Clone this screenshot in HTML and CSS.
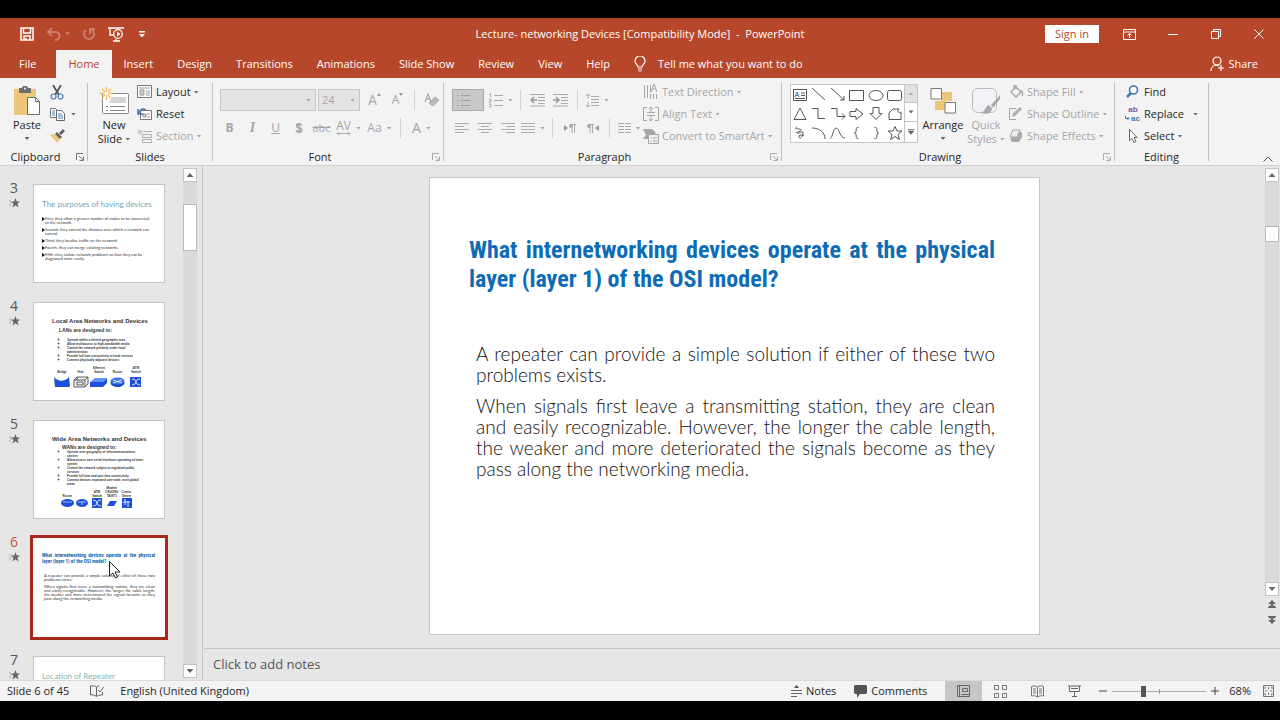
FILE: index.html
```html
<!DOCTYPE html>
<html lang="en">
<head>
    <meta charset="UTF-8">
    <meta name="viewport" content="width=device-width, initial-scale=1.0">
    <title>Lecture- networking Devices - PowerPoint</title>
    <link rel="stylesheet" href="styles.css">
</head>
<body>

    <!-- Shared icons -->
    <svg class="defs" width="0" height="0">
        <symbol id="star" viewBox="0 0 11 10"><path d="M6.500 0l1.300 3.500H11L8.500 5.700l1 3.800-3-2.200-3 2.200 1-3.800L2 3.500h3.200z" fill="#666"/><path d="M0 3h2M1 5h2M0 7h2" stroke="#999" stroke-width=".7"/></symbol>
        <symbol id="launch" viewBox="0 0 8 8"><path d="M.5 7V.5H7M3 3l4 4M7.500 3.500v4h-4" fill="none" stroke="currentColor"/></symbol>
    </svg>

    <!-- Title bar -->
    <header class="titlebar">
        <div class="quick-access">
            <button class="qa" aria-label="Save"><svg width="14" height="14" viewBox="0 0 14 14"><path d="M1 1h12v12H1zM3.500 1v5h7V1M4 13V9h6v4M6 11v2" fill="none" stroke="#fff" stroke-width="1.500"/></svg></button>
            <button class="qa faded" aria-label="Undo"><svg width="24" height="14" viewBox="0 0 24 14"><path d="M6 1L2 5l4 4M2 5h7c6 0 6 7 0 8" fill="none" stroke="#fff" stroke-width="2"/><path d="M19 5h5l-2.500 3z" fill="#fff"/></svg></button>
            <button class="qa faded" aria-label="Redo"><svg width="14" height="14" viewBox="0 0 14 14"><path d="M4 3a5 5 0 1 0 6 0M8 7V2h5" fill="none" stroke="#fff" stroke-width="2"/></svg></button>
            <button class="qa" aria-label="Start from beginning"><svg width="16" height="16" viewBox="0 0 16 16"><path d="M0 2h16M2 2v7h4M5 15h7M8 13v2" fill="none" stroke="#fff" stroke-width="1.300"/><circle cx="10" cy="8" r="4.300" fill="#b7472a" stroke="#fff" stroke-width="1.200"/><path d="M9 5.500l3.500 2.500L9 10.500z" fill="#fff"/></svg></button>
            <button class="qa more" aria-label="Customize toolbar"><svg width="6" height="7" viewBox="0 0 6 7"><path d="M0 0h6v1.400H0zM0 3h6L3 6.500z" fill="#fff"/></svg></button>
        </div>
        <h1 class="doc-title">Lecture- networking Devices [Compatibility Mode] &nbsp;-&nbsp; PowerPoint</h1>
        <div class="window-controls">
            <button class="sign-in">Sign in</button>
            <button class="win" aria-label="Ribbon display options"><svg width="13" height="11" viewBox="0 0 13 11"><path d="M.5.5h12v10H.5zM.5 3h12M6.500 9V4.500M4.500 6.500l2-2 2 2" fill="none" stroke="#fff"/></svg></button>
            <button class="win" aria-label="Minimize"><svg width="10" height="10" viewBox="0 0 10 10"><path d="M0 5.500h10" stroke="#fff"/></svg></button>
            <button class="win" aria-label="Restore"><svg width="10" height="10" viewBox="0 0 10 10"><path d="M.5 2.500h7v7h-7zM2.500 2.500v-2h7v7h-2" fill="none" stroke="#fff"/></svg></button>
            <button class="win" aria-label="Close"><svg width="10" height="10" viewBox="0 0 10 10"><path d="M.5.5l9 9M9.500.5l-9 9" stroke="#fff"/></svg></button>
        </div>
    </header>

    <!-- Ribbon tabs -->
    <nav class="tabs">
        <a class="tab file" href="#">File</a>
        <a class="tab active" href="#">Home</a>
        <a class="tab" href="#">Insert</a>
        <a class="tab" href="#">Design</a>
        <a class="tab" href="#">Transitions</a>
        <a class="tab" href="#">Animations</a>
        <a class="tab" href="#">Slide Show</a>
        <a class="tab" href="#">Review</a>
        <a class="tab" href="#">View</a>
        <a class="tab" href="#">Help</a>
        <button class="tell-me"><svg width="12" height="16" viewBox="0 0 12 16"><path d="M4 11c0-2-3-3-3-6a5 5 0 0 1 10 0c0 3-3 4-3 6zM4 13h4M4.500 15h3" fill="none" stroke="#fff" stroke-width="1.200"/></svg>Tell me what you want to do</button>
        <button class="share"><svg width="15" height="16" viewBox="0 0 15 16"><circle cx="7" cy="5" r="4" fill="none" stroke="#fff" stroke-width="1.200"/><path d="M1 15c0-3 2-6 6-6l2 1M11 9v6M8 12h6" fill="none" stroke="#fff" stroke-width="1.200"/></svg>Share</button>
    </nav>

    <!-- Ribbon -->
    <section class="ribbon">
        <div class="group clipboard">
            <div class="group-body">
                <button class="big paste"><svg width="28" height="30" viewBox="0 0 28 30"><path d="M1 3h22v26H1z" fill="#ebc777"/><path d="M6 2h3c0-3 6-3 6 0h3v5H6z" fill="#6d6d6d"/><circle cx="12" cy="2.500" r="1" fill="#fff"/><path d="M14.500 11.500h8l4 4v13h-12z" fill="#fff" stroke="#6d6d6d"/><path d="M22.500 11.500v4h4" fill="none" stroke="#6d6d6d"/></svg><span>Paste</span><i class="caret"></i></button>
                <div class="stack">
                    <button class="small" aria-label="Cut"><svg width="14" height="15" viewBox="0 0 14 15"><path d="M3 0l6 10M11 0L5 10" stroke="#555" stroke-width="1.800"/><circle cx="3.500" cy="11.500" r="2.500" fill="none" stroke="#4a7ebb" stroke-width="1.200"/><circle cx="10.500" cy="11.500" r="2.500" fill="none" stroke="#4a7ebb" stroke-width="1.200"/></svg></button>
                    <button class="small" aria-label="Copy"><svg width="15" height="14" viewBox="0 0 15 14"><path d="M.5 1.500h5l2 2v7h-7z" fill="#fff" stroke="#777"/><path d="M6.500 3.500h5l3 3v7h-8z" fill="#fff" stroke="#666"/><path d="M8 7h4M8 9h5M8 11h5M2 4h3M2 6h3M2 8h3" stroke="#4a7ebb"/></svg><i class="caret"></i></button>
                    <button class="small" aria-label="Format painter"><svg width="15" height="14" viewBox="0 0 15 14"><path d="M0 6l5-1 5 5-3 4C5 10 2 9 0 6z" fill="#ebc777"/><path d="M5 5l2-2 5 5-2 2zM9 4l4-4 2 2-4 4z" fill="#606060"/></svg></button>
                </div>
            </div>
            <div class="group-label">Clipboard<button class="launcher dark" aria-label="Clipboard options"><svg width="8" height="8"><use href="#launch"/></svg></button></div>
        </div>

        <div class="group slides">
            <div class="group-body">
                <button class="big new-slide"><svg width="29" height="28" viewBox="0 0 29 28"><rect x="2.500" y="6.500" width="26" height="20" rx="1" fill="#fff" stroke="#8a8a8a"/><path d="M12 10h14v6H9z" fill="#d4d4d4"/><path d="M6 19.500h2M10 19.500h15M6 23.500h2M10 23.500h15" stroke="#888"/><path d="M6.500 0v13M0 6.500h13M2 2l9 9M11 2l-9 9" stroke="#f0bd62" stroke-width="1.300"/><circle cx="6.500" cy="6.500" r="2" fill="#fff"/></svg><span>New</span><span>Slide<i class="caret"></i></span></button>
                <div class="stack">
                    <button class="small"><svg width="16" height="14" viewBox="0 0 16 14"><path d="M.5.5h14v12H.5z" fill="#fff" stroke="#777"/><path d="M2 3h11M3 5h4v5H3zM9 6h4M9 8h4M9 10h4" fill="#ccc" stroke="#999"/></svg>Layout<i class="caret"></i></button>
                    <button class="small"><svg width="16" height="14" viewBox="0 0 16 14"><path d="M3.500 3.500h11v9h-11z" fill="#fff" stroke="#777"/><path d="M6 7h3v3H6zM10 7h3M10 10h3" fill="#ccc" stroke="#999"/><path d="M2 6C3 2 6 1 9 3M1 2v5h5" fill="none" stroke="#3f78b5" stroke-width="1.500"/></svg>Reset</button>
                    <button class="small" disabled><svg width="16" height="14" viewBox="0 0 16 14"><path d="M6 2.500h9M5.500 5.500h9v3h-9zM5.500 10.500h9v3h-9z" fill="none" stroke="#b0b0b0"/><path d="M3 0v6M0 3h6M1 1l4 4M5 1L1 5" stroke="#c4c4c4"/></svg>Section<i class="caret"></i></button>
                </div>
            </div>
            <div class="group-label">Slides</div>
        </div>

        <div class="group font">
            <div class="group-body tools">
                <div class="tool-row">
                    <label class="combo face"><select aria-label="Font" disabled><option></option></select><i class="caret"></i></label>
                    <label class="combo size"><select aria-label="Font size" disabled><option>24</option></select><i class="caret"></i></label>
                    <button class="tool" disabled aria-label="Increase font size"><span class="letter">A</span><svg class="mark" width="4" height="3" viewBox="0 0 4 3"><path d="M0 3l2-3 2 3z" fill="#999"/></svg></button>
                    <button class="tool" disabled aria-label="Decrease font size"><span class="letter lesser">A</span><svg class="mark" width="4" height="3" viewBox="0 0 4 3"><path d="M0 0l2 3 2-3z" fill="#999"/></svg></button>
                    <i class="rule"></i>
                    <button class="tool" disabled aria-label="Clear formatting"><svg width="15" height="15" viewBox="0 0 15 15"><path d="M1 9l3-8 3 8M2 6h4" fill="none" stroke="#aaa" stroke-width="1.300"/><path d="M5 10l6-6 4 3-6 6z" fill="#bbb" stroke="#aaa"/></svg></button>
                </div>
                <div class="tool-row">
                    <button class="tool" disabled><b>B</b></button>
                    <button class="tool" disabled><em class="serif">I</em></button>
                    <button class="tool" disabled><u>U</u></button>
                    <button class="tool shadow" disabled><b>S</b></button>
                    <button class="tool" disabled><s>abc</s></button>
                    <button class="tool wide" disabled aria-label="Character spacing"><span class="spacing-icon">AV<svg width="15" height="5" viewBox="0 0 15 5"><path d="M1 2.500h13M3 .5l-2 2 2 2M12 .5l2 2-2 2" fill="none" stroke="#aaa"/></svg></span><i class="caret"></i></button>
                    <button class="tool wide" disabled>Aa<i class="caret"></i></button>
                    <i class="rule"></i>
                    <button class="tool wide" disabled><span class="letter">A</span><i class="caret"></i></button>
                </div>
            </div>
            <div class="group-label">Font<button class="launcher" aria-label="Font options"><svg width="8" height="8"><use href="#launch"/></svg></button></div>
        </div>

        <div class="group paragraph">
            <div class="group-body">
                <div class="tools">
                    <div class="tool-row">
                        <button class="tool bullets" disabled aria-label="Bullets"><svg width="24" height="15" viewBox="0 0 24 15"><path d="M1 2.500h2M1 7.500h2M1 12.500h2M5 2.500h9M5 7.500h9M5 12.500h9" stroke="#a2a0a2"/></svg></button>
                        <button class="tool wide" disabled aria-label="Numbering"><svg width="14" height="15" viewBox="0 0 14 15"><path d="M5 2.500h9M5 7.500h9M5 12.500h9M.5 1l1-.5V4M0 6h2v2H0v1h2M0 11h2v3H0" fill="none" stroke="#aaa"/></svg><i class="caret"></i></button>
                        <i class="rule"></i>
                        <button class="tool" disabled aria-label="Decrease indent"><svg width="16" height="14" viewBox="0 0 16 14"><path d="M0 1.500h15M8 4.500h7M8 7.500h7M8 10.500h7M0 13h15" stroke="#aaa"/><path d="M7 7H1M4 4L1 7l3 3" fill="none" stroke="#999" stroke-width="1.500"/></svg></button>
                        <button class="tool" disabled aria-label="Increase indent"><svg width="16" height="14" viewBox="0 0 16 14"><path d="M0 1.500h15M8 4.500h7M8 7.500h7M8 10.500h7M0 13h15" stroke="#aaa"/><path d="M0 7h6M3 4l3 3-3 3" fill="none" stroke="#999" stroke-width="1.500"/></svg></button>
                        <i class="rule"></i>
                        <button class="tool wide" disabled aria-label="Line spacing"><svg width="14" height="15" viewBox="0 0 14 15"><path d="M6 3.500h8M6 6.500h8M6 9.500h8M6 12.500h8M3 1v5M1 3l2-2 2 2M3 14V9M1 12l2 2 2-2" fill="none" stroke="#aaa"/></svg><i class="caret"></i></button>
                    </div>
                    <div class="tool-row">
                        <button class="tool" disabled aria-label="Align left"><svg width="14" height="11" viewBox="0 0 14 11"><path d="M0 .5h14M0 3.500h9M0 6.500h14M0 9.500h9" stroke="#aaa"/></svg></button>
                        <button class="tool" disabled aria-label="Center"><svg width="14" height="11" viewBox="0 0 14 11"><path d="M0 .5h14M3 3.500h8M0 6.500h14M3 9.500h8" stroke="#aaa"/></svg></button>
                        <button class="tool" disabled aria-label="Align right"><svg width="14" height="11" viewBox="0 0 14 11"><path d="M0 .5h14M5 3.500h9M0 6.500h14M5 9.500h9" stroke="#aaa"/></svg></button>
                        <button class="tool wide" disabled aria-label="Justify"><svg width="14" height="11" viewBox="0 0 14 11"><path d="M0 .5h14M0 3.500h14M0 6.500h14M0 9.500h14" stroke="#aaa"/></svg><i class="caret"></i></button>
                        <i class="rule"></i>
                        <button class="tool" disabled aria-label="Left-to-right"><svg width="12" height="9" viewBox="0 0 12 9"><path d="M0 1l4 3-4 3z" fill="#999"/><path d="M8 0v9M10.500 0v9M6 .5h6" stroke="#aaa"/><circle cx="7" cy="2" r="2" fill="#aaa"/></svg></button>
                        <button class="tool" disabled aria-label="Right-to-left"><svg width="12" height="9" viewBox="0 0 12 9"><path d="M12 1L8 4l4 3z" fill="#999"/><path d="M3 0v9M5.500 0v9M1 .5h6" stroke="#aaa"/><circle cx="2" cy="2" r="2" fill="#aaa"/></svg></button>
                        <i class="rule"></i>
                        <button class="tool wide" disabled aria-label="Columns"><svg width="13" height="11" viewBox="0 0 13 11"><path d="M0 .5h6M0 3.500h6M0 6.500h6M0 9.500h6M7 .5h6M7 3.500h6M7 6.500h6M7 9.500h6" stroke="#aaa"/></svg><i class="caret"></i></button>
                    </div>
                </div>
                <div class="stack">
                    <button class="small" disabled><svg width="16" height="16" viewBox="0 0 16 16"><path d="M1.500 1v13M4.500 1v13M7.500 1v7M7.500 10v5M10.500 10v5M13.500 10v5M8 8l3-8 3 8M9 5h4" fill="none" stroke="#a5a5a5"/></svg>Text Direction<i class="caret"></i></button>
                    <button class="small" disabled><svg width="16" height="14" viewBox="0 0 16 14"><path d="M4 .5H.5v13H4M12 .5h3.500v13H12M4 5.500h8M4 8.500h8M8 0v5M6 2l2-2 2 2M8 14V9M6 12l2 2 2-2" fill="none" stroke="#a5a5a5"/></svg>Align Text<i class="caret"></i></button>
                    <button class="small" disabled><svg width="16" height="15" viewBox="0 0 16 15"><path d="M0 0h9l4 4-4 3H6v3H0l3-4z" fill="#a5a5a5"/><path d="M5.500 5.500h10v9h-10z" fill="#eee" stroke="#a5a5a5"/><path d="M8 9h1M10 9h4M8 12h1M10 12h4" stroke="#a5a5a5"/></svg>Convert to SmartArt<i class="caret"></i></button>
                </div>
            </div>
            <div class="group-label">Paragraph<button class="launcher" aria-label="Paragraph options"><svg width="8" height="8"><use href="#launch"/></svg></button></div>
        </div>

        <div class="group drawing">
            <div class="group-body">
                <div class="gallery">
                    <div class="shapes">
                        <button aria-label="Text box"><svg viewBox="0 0 16 14"><path d="M1.500 1.500h13v11h-13z"/><path d="M3 9l2-5 2 5M4 7.500h2" stroke="#4a7ebb"/><path d="M9 5h4M9 7.500h4M3 10.500h10"/></svg></button>
                        <button aria-label="Line"><svg viewBox="0 0 16 14"><path d="M1 0l13 12"/></svg></button>
                        <button aria-label="Arrow"><svg viewBox="0 0 16 14"><path d="M1 0l13 12M14 8v4h-4"/></svg></button>
                        <button aria-label="Rectangle"><svg viewBox="0 0 16 14"><path d="M.5 2.500h14v10H.5z"/></svg></button>
                        <button aria-label="Oval"><svg viewBox="0 0 16 14"><ellipse cx="8" cy="7.500" rx="7" ry="5"/></svg></button>
                        <button aria-label="Rounded rectangle"><svg viewBox="0 0 16 14"><rect x=".5" y="2.500" width="14" height="10" rx="2"/></svg></button>
                        <button aria-label="Triangle"><svg viewBox="0 0 16 14"><path d="M8 1l6 11.500H2z"/></svg></button>
                        <button aria-label="Elbow connector"><svg viewBox="0 0 16 14"><path d="M1 1.500h6v10h7"/></svg></button>
                        <button aria-label="Elbow arrow"><svg viewBox="0 0 16 14"><path d="M1 1.500h6v8h8M12 6.500l3 3-3 3"/></svg></button>
                        <button aria-label="Right arrow"><svg viewBox="0 0 16 14"><path d="M1 4.500h6v-3l7 5.500-7 5.500v-3H1z"/></svg></button>
                        <button aria-label="Down arrow"><svg viewBox="0 0 16 14"><path d="M5 .5h6v6h3l-6 6-6-6h3z"/></svg></button>
                        <button aria-label="Freeform"><svg viewBox="0 0 16 14"><path d="M2 12.500V6l4-4h6c-3 3 0 4 2 3v7.500z"/></svg></button>
                        <button aria-label="Scribble"><svg viewBox="0 0 16 14"><path d="M5 1c-5 3 4 1 4 3S3 6 5 7s6-3 6 0-3 7-4 4 5-2 5-1"/></svg></button>
                        <button aria-label="Arc"><svg viewBox="0 0 16 14"><path d="M1 2c7 0 13 4 13 11"/></svg></button>
                        <button aria-label="Curve"><svg viewBox="0 0 16 14"><path d="M0 12c3 0 3-10 6-10s4 10 9 10"/></svg></button>
                        <button aria-label="Left brace"><svg viewBox="0 0 16 14"><path d="M9.500 1.500h-1C6 1.500 8.500 6.500 5.500 7 8.500 7.500 6 12.500 8.500 12.500h1"/></svg></button>
                        <button aria-label="Right brace"><svg viewBox="0 0 16 14"><path d="M6.500 1.500h1C10 1.500 7.500 6.500 10.500 7 7.500 7.500 10 12.500 7.500 12.500h-1"/></svg></button>
                        <button aria-label="Star"><svg viewBox="0 0 16 14"><path d="M8 .5l2 4.500h5l-4 3.500 1.500 5L8 10.500l-4.500 3 1.500-5L1 5h5z"/></svg></button>
                    </div>
                    <div class="gallery-nav">
                        <button class="off" aria-label="Previous shapes"><i class="caret up"></i></button>
                        <button aria-label="Next shapes"><i class="caret"></i></button>
                        <button aria-label="More shapes"><i class="caret more"></i></button>
                    </div>
                </div>
                <button class="big arrange"><svg width="26" height="26" viewBox="0 0 26 26"><path d="M11 4h11v9H11zM5 13h10v9H5z" fill="#ebc777"/><path d="M1 .5h10.500V11H1zM15 14.500h10.500V25H15z" fill="#fff" stroke="#777"/></svg><span>Arrange</span><i class="caret"></i></button>
                <button class="big quick" disabled><svg width="30" height="28" viewBox="0 0 30 28"><rect x="1.500" y="1.500" width="24" height="24" rx="5" fill="#f3f0f7" stroke="#bbb"/><path d="M29 8L20 18l2 3 7-9zM18 18c-4 1-3 6-8 8 6 2 11 0 11-5z" fill="#ababab"/></svg><span>Quick</span><span>Styles<i class="caret"></i></span></button>
                <div class="stack">
                    <button class="small" disabled><svg width="16" height="14" viewBox="0 0 16 14"><path d="M3 7l5-5 5 5-5 5zM6 5V0h2v4M13 5c2 2 2 4 1 6" fill="none" stroke="#a5a5a5" stroke-width="1.300"/></svg>Shape Fill<i class="caret"></i></button>
                    <button class="small" disabled><svg width="16" height="14" viewBox="0 0 16 14"><path d="M8 1.500H1.500v11H8" fill="none" stroke="#a5a5a5"/><path d="M4 10l1-4 7-6 2 2-7 7z" fill="#b0b0b0"/></svg>Shape Outline<i class="caret"></i></button>
                    <button class="small" disabled><svg width="16" height="14" viewBox="0 0 16 14"><path d="M2 10l2 3h7l3-5V4l-3-3z" fill="#aaa"/><path d="M5 1h7l-3 7H2z" fill="#eee" stroke="#a5a5a5"/></svg>Shape Effects<i class="caret"></i></button>
                </div>
            </div>
            <div class="group-label">Drawing<button class="launcher" aria-label="Drawing options"><svg width="8" height="8"><use href="#launch"/></svg></button></div>
        </div>

        <div class="group editing">
            <div class="group-body">
                <div class="stack">
                    <button class="small"><svg width="16" height="14" viewBox="0 0 16 14"><circle cx="8.500" cy="5" r="4" fill="#fff" stroke="#3f78b5" stroke-width="1.600"/><path d="M6 8l-4 4" stroke="#3f78b5" stroke-width="2.500"/></svg>Find</button>
                    <button class="small"><span class="replace-icon"><span class="from">ab</span><span class="to"><svg width="5" height="5" viewBox="0 0 5 5"><path d="M.5 0v2.500h3M2.500 1l1.500 1.500L2.500 4" fill="none" stroke="#3f78b5"/></svg>ac</span></span>Replace<i class="caret far"></i></button>
                    <button class="small"><svg width="16" height="14" viewBox="0 0 16 14"><path d="M4.500.5v11l2.500-2 2 4 2-1-2-4h3z" fill="#fff" stroke="#666"/></svg>Select<i class="caret"></i></button>
                </div>
            </div>
            <div class="group-label">Editing</div>
        </div>
        <button class="collapse" aria-label="Collapse the ribbon"><svg width="10" height="6" viewBox="0 0 10 6"><path d="M.5 5.500L5 1l4.500 4.500" fill="none" stroke="#555"/></svg></button>
    </section>

    <!-- Work area -->
    <main class="workspace">
        <aside class="slide-pane">
            <ol class="thumbs">
                <li class="thumb-item">
                    <div class="thumb-no">3<svg width="11" height="10"><use href="#star"/></svg></div>
                    <div class="thumb purposes">
                        <h3>The purposes of having devices</h3>
                        <ul>
                            <li>First, they allow a greater number of nodes to be connected to the network.</li>
                            <li>Second, they extend the distance over which a network can extend.</li>
                            <li>Third, they localize traffic on the network.</li>
                            <li>Fourth, they can merge existing networks.</li>
                            <li>Fifth, they isolate network problems so that they can be diagnosed more easily.</li>
                        </ul>
                    </div>
                </li>
                <li class="thumb-item">
                    <div class="thumb-no">4<svg width="11" height="10"><use href="#star"/></svg></div>
                    <div class="thumb areas lan">
                        <h3>Local Area Networks and Devices</h3>
                        <h4>LANs are designed to:</h4>
                        <ul>
                            <li>Operate within a limited geographic area</li>
                            <li>Allow multiaccess to high-bandwidth media</li>
                            <li>Control the network privately under local administration</li>
                            <li>Provide full-time connectivity to local services</li>
                            <li>Connect physically adjacent devices</li>
                        </ul>
                        <div class="devices">
                            <figure><figcaption>Bridge</figcaption><svg width="16" height="12" viewBox="0 0 16 12"><path d="M0 1c4 5 11 5 15 0l1 9-1 1H1z" fill="#1d50d8"/></svg></figure>
                            <figure><figcaption>Hub</figcaption><svg width="16" height="12" viewBox="0 0 16 12"><path d="M1 4h11v7H1zM1 4l3-3h11l-3 3M15 1v7l-3 3M4 1v3M4 6h6v3H4z" fill="#eee" stroke="#222" stroke-width=".7"/></svg></figure>
                            <figure><figcaption>Ethernet Switch</figcaption><svg width="18" height="12" viewBox="0 0 18 12"><path d="M0 6l5-4h12l-4 4z" fill="#5c93f5"/><path d="M0 6h13v5H0zM13 6l4-4v5l-4 4z" fill="#1d50d8"/></svg></figure>
                            <figure><figcaption>Router</figcaption><svg width="15" height="12" viewBox="0 0 15 12"><ellipse cx="7.500" cy="7" rx="7" ry="4" fill="#1647c4"/><ellipse cx="7.500" cy="5" rx="7" ry="3.500" fill="#3c72e8"/><path d="M3 4l9 3M12 4L3 7" stroke="#dce8ff"/></svg></figure>
                            <figure><figcaption>ATM Switch</figcaption><svg width="12" height="12" viewBox="0 0 12 12"><path d="M0 1h11v10H0z" fill="#1d50d8"/><path d="M2 3c6 0 2 6 8 6M2 9c6 0 2-6 8-6" fill="none" stroke="#dce8ff"/></svg></figure>
                        </div>
                    </div>
                </li>
                <li class="thumb-item">
                    <div class="thumb-no">5<svg width="11" height="10"><use href="#star"/></svg></div>
                    <div class="thumb areas wan">
                        <h3>Wide Area Networks and Devices</h3>
                        <h4>WANs are designed to:</h4>
                        <ul>
                            <li>Operate over geography of telecommunications carriers</li>
                            <li>Allow access over serial interfaces operating at lower speeds</li>
                            <li>Control the network subject to regulated public services</li>
                            <li>Provide full-time and part-time connectivity</li>
                            <li>Connect devices separated over wide, even global areas</li>
                        </ul>
                        <div class="devices">
                            <figure><figcaption>Router</figcaption><svg width="13" height="10" viewBox="0 0 13 10"><ellipse cx="6.500" cy="5" rx="6.500" ry="4" fill="#1d50d8"/><path d="M2 4h9" stroke="#9dbcff"/></svg></figure>
                            <figure><svg width="12" height="10" viewBox="0 0 12 10"><ellipse cx="6" cy="5" rx="6" ry="4" fill="#1d50d8"/><path d="M2 4h8M6 3v4" stroke="#9dbcff"/></svg></figure>
                            <figure><figcaption>ATM Switch</figcaption><svg width="10" height="10" viewBox="0 0 10 10"><path d="M0 0h10v10H0z" fill="#1d50d8"/><path d="M1 2c6 0 2 6 8 6M1 8c6 0 2-6 8-6" fill="none" stroke="#dce8ff"/></svg></figure>
                            <figure><figcaption>Modem CSU/DSU TA/NT1</figcaption><svg width="12" height="10" viewBox="0 0 12 10"><path d="M1 8l3-5h7L8 8z" fill="#1d50d8"/></svg></figure>
                            <figure><figcaption>Comm. Server</figcaption><svg width="10" height="10" viewBox="0 0 10 10"><path d="M0 0h10v10H0z" fill="#1d50d8"/><path d="M3 1v6M1 4h7M6 3v6" stroke="#dce8ff"/></svg></figure>
                        </div>
                    </div>
                </li>
                <li class="thumb-item selected">
                    <div class="thumb-no">6<svg width="11" height="10"><use href="#star"/></svg></div>
                    <div class="thumb repeater">
                        <h3>What internetworking devices operate at the physical layer (layer 1) of the OSI model?</h3>
                        <p>A repeater can provide a simple solution if either of these two problems exists.</p>
                        <p>When signals first leave a transmitting station, they are clean and easily recognizable. However, the longer the cable length, the weaker and more deteriorated the signals become as they pass along the networking media.</p>
                        <svg class="pointer" width="12" height="18" viewBox="0 0 12 18"><path d="M.5.500v14.500l3.500-3 2.500 5 2-1-2.500-5h5z" fill="#fff" stroke="#222"/></svg>
                    </div>
                </li>
                <li class="thumb-item">
                    <div class="thumb-no">7<svg width="11" height="10"><use href="#star"/></svg></div>
                    <div class="thumb location"><h3>Location of Repeater</h3></div>
                </li>
            </ol>
            <div class="scrollbar">
                <button aria-label="Scroll slides up"><i class="caret up"></i></button>
                <div class="track"><div class="grip tall"></div></div>
                <button aria-label="Scroll slides down"><i class="caret"></i></button>
            </div>
        </aside>

        <section class="editor">
            <div class="canvas">
                <article class="slide">
                    <h2>What internetworking devices operate at the physical layer (layer 1) of the OSI model?</h2>
                    <p>A repeater can provide a simple solution if either of these two problems exists.</p>
                    <p>When signals first leave a transmitting station, they are clean and easily recognizable. However, the longer the cable length, the weaker and more deteriorated the signals become as they pass along the networking media.</p>
                </article>
                <div class="scrollbar">
                    <button aria-label="Scroll up"><i class="caret up"></i></button>
                    <div class="track"><div class="grip"></div></div>
                    <button aria-label="Scroll down"><i class="caret"></i></button>
                    <button class="jump" aria-label="Previous slide"><svg width="8" height="8" viewBox="0 0 8 8"><path d="M0 4l4-4 4 4H5v1l3 2v1H0V7l3-2V4z" fill="#666"/></svg></button>
                    <button class="jump" aria-label="Next slide"><svg width="8" height="8" viewBox="0 0 8 8"><path d="M0 4l4 4 4-4H5V3l3-2V0H0v1l3 2v1z" fill="#666"/></svg></button>
                </div>
            </div>
            <div class="notes">Click to add notes</div>
        </section>
    </main>

    <!-- Status bar -->
    <footer class="statusbar">
        <span class="slide-count">Slide 6 of 45</span>
        <button class="proof" aria-label="Spelling"><svg width="14" height="12" viewBox="0 0 14 12"><path d="M6.500 2v9M6.500 2C5 .5 2 .5.500 1v9c2-.5 4 0 6 1.500 1-1 3-1.500 6-1.500V7M6.500 2c1-1 2-1 3-1M8 5l2 2 3.500-5" fill="none" stroke="#666"/></svg></button>
        <button class="language">English (United Kingdom)</button>
        <button class="panel-btn notes-btn"><svg width="11" height="12" viewBox="0 0 11 12"><path d="M0 5.500h11M0 8.500h11M0 11.500h6" stroke="#666"/><path d="M3 3l2.500-3L8 3z" fill="#555"/></svg>Notes</button>
        <button class="panel-btn"><svg width="13" height="13" viewBox="0 0 13 13"><path d="M1 0h11l1 1v7l-1 1H6l-3 4V9H1L0 8V1z" fill="#555"/></svg>Comments</button>
        <div class="views">
            <button class="view on" aria-label="Normal"><svg width="13" height="12" viewBox="0 0 13 12"><path d="M.5.500h12v11H.5zM2.500.5v11M4.500 9.500h8M5.500 3.500h5v3h-5z" fill="none" stroke="#666"/></svg></button>
            <button class="view" aria-label="Slide sorter"><svg width="13" height="13" viewBox="0 0 13 13"><path d="M.5.500h4v4h-4zM8.500.5h4v4h-4zM.5 8.500h4v4h-4zM8.500 8.500h4v4h-4z" fill="none" stroke="#777"/></svg></button>
            <button class="view" aria-label="Reading view"><svg width="13" height="13" viewBox="0 0 13 13"><path d="M6.500 2v10M.5 1.500c2-1 4-1 6 .5 2-1.500 4-1.500 6-.5v9.500c-2-.5-4-.5-6 1-2-1.500-4-1.500-6-1zM2 4h3M2 6h3M2 8h3M8 4h3M8 6h3M8 8h3" fill="none" stroke="#777"/></svg></button>
            <button class="view" aria-label="Slide show"><svg width="13" height="12" viewBox="0 0 13 12"><path d="M0 1h13M1.500 1v5.500h10V1M3 3.500h7M6.500 7v4M4 11.500h5" fill="none" stroke="#666"/></svg></button>
        </div>
        <div class="zoom">
            <button aria-label="Zoom out"><svg width="8" height="8" viewBox="0 0 8 8"><path d="M0 4h8" stroke="#444"/></svg></button>
            <input type="range" min="10" max="190" value="68" aria-label="Zoom">
            <button aria-label="Zoom in"><svg width="8" height="8" viewBox="0 0 8 8"><path d="M0 4h8M4 0v8" stroke="#444"/></svg></button>
        </div>
        <button class="percent">68%</button>
        <button class="fit" aria-label="Fit slide to window"><svg width="11" height="12" viewBox="0 0 11 12"><path d="M.5.500h10v11H.5zM5.500 2v2.500M5.500 7.500V10M2 6h2M7 6h2M2 4V2h1M8 2h1v2M2 8v2h1M8 10h1V8" fill="none" stroke="#777"/></svg></button>
    </footer>

</body>
</html>
```
FILE: styles.css
```css
/* General styles */
* {
    box-sizing: border-box;
}

body {
    font-family: "Open Sans", "Noto Sans", sans-serif;
    font-size: 11px;
    line-height: 14px;
    color: #262626;
    margin: 0;
    padding: 18px 0 19px 0;
    height: 100vh;
    display: flex;
    flex-direction: column;
    background-color: #000;
    overflow: hidden;
}

button {
    font: inherit;
    color: inherit;
    background: none;
    border: none;
    padding: 0;
    margin: 0;
    white-space: nowrap;
}

button:disabled {
    color: #a6a6a6;
}

svg {
    display: block;
    flex: none;
}

.defs {
    position: absolute;
}

h1, h2, h3, h4, p, ul, ol, figure {
    margin: 0;
    padding: 0;
}

.caret {
    flex: none;
    width: 5px;
    height: 3px;
    background-color: #666;
    clip-path: polygon(0 0, 100% 0, 50% 100%);
}

.caret.up {
    clip-path: polygon(0 100%, 100% 100%, 50% 0);
}

.caret.more {
    width: 7px;
    height: 6px;
    clip-path: polygon(0 0, 100% 0, 100% 17%, 0 17%, 0 34%, 100% 34%, 50% 100%, 0 34%);
}

button:disabled .caret,
.combo .caret {
    background-color: #a6a6a6;
}

/* Title bar */
.titlebar {
    flex: none;
    display: grid;
    grid-template-columns: 1fr auto 1fr;
    align-items: center;
    height: 32px;
    background-color: #b7472a;
    color: #fff;
}

.quick-access {
    display: flex;
    align-items: center;
    gap: 12px;
    padding-left: 20px;
}

.qa.more {
    margin-left: 3px;
}

.faded {
    opacity: .3;
}

.doc-title {
    font-size: 11px;
    font-weight: 400;
}

.window-controls {
    display: flex;
    justify-content: flex-end;
    align-items: center;
}

.sign-in {
    width: 54px;
    height: 18px;
    margin-right: 9px;
    background-color: #fff;
    color: #b7472a;
}

.win {
    display: flex;
    justify-content: center;
    width: 43px;
}

/* Ribbon tabs */
.tabs {
    flex: none;
    display: flex;
    height: 28px;
    background-color: #b7472a;
    color: #fff;
}

.tab {
    display: flex;
    align-items: center;
    padding: 0 12px;
    color: #fff;
    text-decoration: none;
}

.tab.file {
    padding: 0 20px 0 19px;
}

.tab.active {
    background-color: #f3f3f3;
    color: #b7472a;
}

.tell-me,
.share {
    display: flex;
    align-items: center;
    gap: 12px;
}

.tell-me {
    margin-left: 12px;
}

.share {
    gap: 3px;
    margin-left: auto;
    padding-right: 22px;
}

/* Ribbon */
.ribbon {
    flex: none;
    display: flex;
    height: 88px;
    background-color: #f3f3f3;
    border-bottom: 1px solid #d0d0d0;
}

.group {
    flex: none;
    display: flex;
    flex-direction: column;
    margin: 5px 0 4px 0;
    border-right: 1px solid #c0c0c0;
}

.clipboard { width: 88px; }
.slides { width: 125px; }
.font { width: 231px; }
.paragraph { width: 338px; }
.drawing { width: 333px; }
.editing { width: 94px; }

.group-body {
    display: flex;
    height: 66px;
}

.group-label {
    display: flex;
    justify-content: center;
    align-items: center;
    position: relative;
    height: 8px;
    margin-top: auto;
    padding-right: 16px;
}

.slides .group-label,
.editing .group-label {
    padding-right: 0;
}

.launcher {
    position: absolute;
    right: 3px;
    bottom: 0;
    color: #aaa;
}

.launcher.dark {
    color: #777;
}

.big {
    display: flex;
    flex-direction: column;
    align-items: center;
    padding-top: 3px;
}

.big span {
    display: flex;
    align-items: center;
    gap: 3px;
    height: 14px;
}

.big svg {
    margin-bottom: 2px;
    height: 30px;
}

.big > .caret {
    margin-top: 5px;
}

.paste { width: 42px; margin-left: 6px; }
.new-slide { width: 46px; margin-left: 3px; }
.arrange { width: 50px; }
.quick { width: 36px; }

.stack {
    display: grid;
    grid-template-rows: repeat(3, 22px);
    margin-top: -2px;
}

.clipboard .stack {
    margin-left: 2px;
}

.quick + .stack {
    margin-left: 4px;
}

.small {
    display: flex;
    align-items: center;
    gap: 3px;
}

.clipboard .small {
    gap: 6px;
}

.caret.far {
    margin-left: 6px;
}

.tools {
    flex-direction: column;
    padding: 3px 0 0 5px;
}

.paragraph .tools {
    padding-left: 6px;
    width: 199px;
}

.tool-row {
    display: flex;
    align-items: center;
    height: 28px;
}

.tool {
    flex: none;
    display: flex;
    justify-content: center;
    align-items: center;
    width: 23px;
    height: 22px;
    font-size: 12px;
}

.tool.wide {
    width: 31px;
    gap: 5px;
}

.paragraph .tool.wide {
    width: 28px;
}

.tool.bullets {
    width: 32px;
    background-color: #c9c7c9;
    border: 1px solid #a9a9a9;
    margin: 0 3px 0 2px;
}

.tool.shadow {
    text-shadow: 1px 1px 1px #aaa;
}

.tool s {
    font-size: 11px;
}

.serif {
    font-family: "Liberation Serif", serif;
    font-size: 14px;
    font-weight: 700;
}

.letter {
    font-size: 14px;
}

.letter.lesser {
    font-size: 12px;
}

.mark {
    align-self: flex-start;
    margin-top: 4px;
}

.spacing-icon {
    line-height: 11px;
}

.rule {
    flex: none;
    width: 1px;
    height: 20px;
    margin: 0 5px;
    background-color: #d4d4d4;
}

.combo {
    display: grid;
    align-items: center;
    height: 22px;
    margin-left: 2px;
}

.combo.face { width: 98px; }
.combo.size { width: 43px; margin-right: 3px; }

.combo select,
.combo .caret {
    grid-area: 1 / 1;
}

.combo select {
    appearance: none;
    width: 100%;
    height: 22px;
    padding: 0 3px;
    font: inherit;
    color: #a6a6a6;
    background-color: #e4e3e4;
    border: 1px solid #c6c6c6;
    border-radius: 0;
    opacity: 1;
}

.combo .caret {
    justify-self: end;
    margin-right: 5px;
}

/* Shape gallery */
.gallery {
    display: flex;
    width: 128px;
    height: 59px;
    margin: 1px 0 0 8px;
    background-color: #fff;
    border: 1px solid #c6c6c6;
}

.shapes {
    flex: 1;
    display: grid;
    grid-template-columns: repeat(6, 1fr);
    align-items: center;
    justify-items: center;
}

.shapes svg {
    width: 16px;
    height: 14px;
    fill: none;
    stroke: #555;
}

.gallery-nav {
    display: grid;
    width: 13px;
    border-left: 1px solid #c6c6c6;
}

.gallery-nav button {
    display: flex;
    align-items: center;
    justify-content: center;
}

.gallery-nav button + button {
    border-top: 1px solid #c6c6c6;
}

.gallery-nav .off {
    background-color: #e1e1e1;
}

.gallery-nav .off .caret {
    background-color: #aaa;
}

.editing .stack {
    margin-left: 10px;
}

.replace-icon {
    display: flex;
    flex-direction: column;
    width: 16px;
    font-family: "Liberation Sans", sans-serif;
    font-size: 8px;
    line-height: 9px;
    font-weight: 700;
}

.replace-icon .from {
    color: #8a4fa3;
}

.replace-icon .to {
    display: flex;
    align-items: center;
    gap: 1px;
    color: #3f78b5;
}

.collapse {
    margin: auto 7px 3px auto;
}

/* Work area */
.workspace {
    flex: 1;
    min-height: 0;
    display: flex;
    background-color: #e6e6e6;
}

.slide-pane {
    flex: none;
    display: flex;
    justify-content: space-between;
    width: 203px;
    padding-right: 5px;
    border-right: 1px solid #c6c6c6;
}

.thumbs {
    list-style: none;
    overflow: hidden;
    padding: 18px 4px 0 0;
}

.thumb-item {
    display: flex;
    height: 118px;
}

.thumb-no {
    width: 33px;
    padding-left: 10px;
    margin-top: -4px;
    font-size: 14px;
    line-height: 16px;
    color: #555;
}

.thumb-no svg {
    margin: 2px 0 0 -1px;
}

.selected .thumb-no {
    color: #c8503a;
}

.thumb {
    position: relative;
    width: 132px;
    height: 99px;
    background-color: #fff;
    border: 1px solid #c4c4c4;
    font-size: 4px;
    line-height: 4px;
    color: #333;
}

.selected .thumb {
    border-color: #fff;
    outline: 3px solid #a5281b;
}

.purposes,
.location {
    padding: 14px 10px 0 8px;
    font-family: Lato, sans-serif;
}

.purposes h3,
.location h3 {
    font-size: 8px;
    line-height: 10px;
    font-weight: 400;
    color: #6faabd;
    white-space: nowrap;
}

.location h3 {
    color: #7fb5ae;
}

.purposes ul {
    list-style: none;
    margin-top: 8px;
}

.purposes li {
    position: relative;
    margin-bottom: 3px;
    padding-left: 3px;
}

.purposes li::before {
    content: "";
    position: absolute;
    left: 0;
    top: 0;
    width: 3px;
    height: 4px;
    background-color: #111;
    clip-path: polygon(0 0, 100% 50%, 0 100%);
}

.areas {
    padding: 14px 18px 0 18px;
    font-family: "Liberation Sans", sans-serif;
    font-weight: 700;
}

.areas h3 {
    font-size: 6px;
    line-height: 8px;
    text-align: center;
    white-space: nowrap;
}

.areas h4 {
    margin: 2px 0 5px 7px;
    font-size: 5px;
    line-height: 6px;
}

.areas ul {
    margin: 0 0 0 15px;
    font-size: 3px;
}

.lan ul {
    margin-right: 6px;
}

.wan h4 {
    margin: 1px 0 0 10px;
}

.devices {
    display: flex;
    justify-content: space-between;
    align-items: flex-end;
    margin: 4px 2px 0 2px;
    font-size: 3px;
    text-align: center;
}

.wan .devices {
    margin: 0 12px 0 8px;
}

.devices figure {
    display: flex;
    flex-direction: column;
    align-items: center;
    gap: 2px;
    width: 16px;
}

.wan figure {
    gap: 0;
}

.repeater {
    padding: 13px 9px 0 8px;
    font-family: Lato, sans-serif;
    text-align: justify;
}

.repeater h3 {
    margin-bottom: 10px;
    font-family: "Liberation Sans Narrow", "Roboto Condensed", "Liberation Sans", sans-serif;
    font-size: 5px;
    line-height: 6px;
    color: #0f68b0;
}

.repeater p {
    margin: 0 0 3px 2px;
}

.pointer {
    position: absolute;
    left: 75px;
    top: 22px;
}

/* Scrollbars */
.scrollbar {
    flex: none;
    display: flex;
    flex-direction: column;
    width: 14px;
    padding: 2px 0;
}

.scrollbar button {
    display: flex;
    align-items: center;
    justify-content: center;
    height: 14px;
    background-color: #fff;
    border: 1px solid #c2c2c2;
}

.scrollbar .caret {
    width: 7px;
    height: 4px;
}

.scrollbar .jump {
    height: 16px;
    background: none;
    border: none;
}

.track {
    flex: 1;
    background-color: #dadada;
}

.grip {
    height: 16px;
    margin-top: 44px;
    background-color: #fff;
    border: 1px solid #b8b8b8;
}

.grip.tall {
    height: 47px;
    margin-top: 22px;
}

/* Slide editor */
.editor {
    flex: 1;
    display: flex;
    flex-direction: column;
    margin-left: 1px;
}

.canvas {
    flex: 1;
    display: flex;
    justify-content: space-between;
    align-items: flex-start;
}

.canvas .scrollbar {
    align-self: stretch;
    margin-right: 1px;
    padding-bottom: 20px;
}

.slide {
    width: 611px;
    aspect-ratio: 4 / 3;
    margin: 11px auto 0 auto;
    padding: 58px 44px 0 39px;
    background-color: #fff;
    border: 1px solid #c8c8c8;
    font-family: Lato, sans-serif;
    font-size: 19px;
    font-weight: 300;
    line-height: 21px;
    color: #111;
    text-align: justify;
}

.slide h2 {
    margin-bottom: 49px;
    font-family: "Liberation Sans Narrow", "Roboto Condensed", "Liberation Sans", sans-serif;
    font-size: 24px;
    line-height: 29px;
    font-weight: 700;
    color: #0d6cb5;
}

.slide p {
    margin: 0 0 10px 7px;
}

.notes {
    height: 32px;
    padding: 0 9px;
    border-top: 1px solid #c6c6c6;
    font-size: 13px;
    line-height: 30px;
    color: #555;
}

/* Status bar */
.statusbar {
    flex: none;
    display: flex;
    align-items: center;
    height: 21px;
    padding-left: 7px;
    background-color: #f3f3f3;
    border-top: 1px solid #dadada;
    font-size: 11px;
}

.proof {
    margin: 0 16px 0 21px;
}

.panel-btn {
    display: flex;
    align-items: center;
    gap: 4px;
    margin-right: 18px;
}

.notes-btn {
    margin-left: auto;
}

.views {
    display: flex;
    height: 20px;
}

.view {
    display: flex;
    align-items: center;
    justify-content: center;
    width: 37px;
}

.view.on {
    background-color: #c6c6c6;
}

.zoom {
    display: flex;
    align-items: center;
    gap: 5px;
    margin: 0 10px 0 6px;
}

.zoom input {
    appearance: none;
    width: 94px;
    height: 12px;
    margin: 0;
    background:
        linear-gradient(#999, #999) center / 1px 5px no-repeat,
        linear-gradient(#aaa, #aaa) center / 100% 1px no-repeat;
}

.zoom input::-webkit-slider-thumb {
    appearance: none;
    width: 5px;
    height: 11px;
    background-color: #555;
}

.fit {
    margin: 0 6px 0 12px;
}
```
